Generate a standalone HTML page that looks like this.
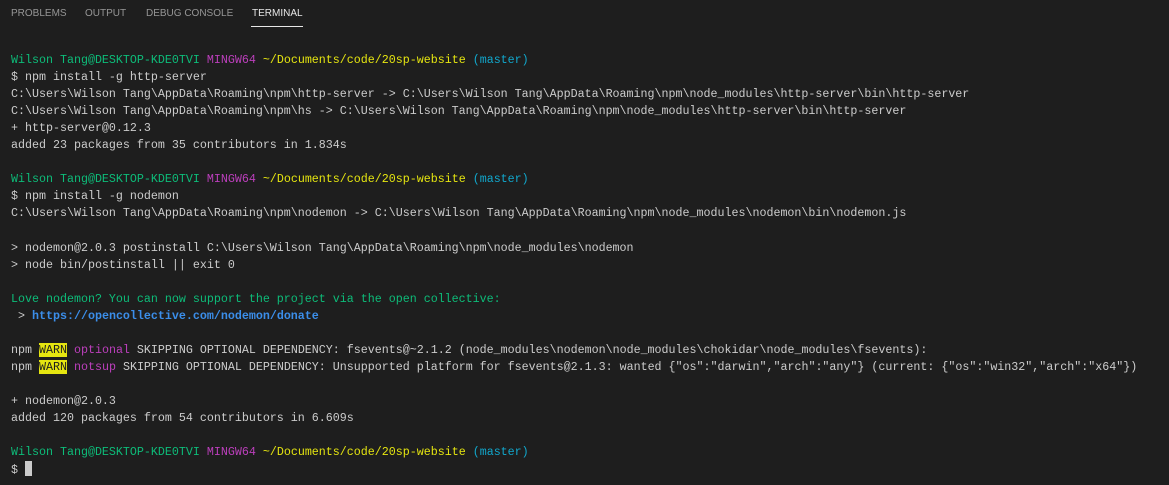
<!DOCTYPE html>
<html><head><style>
html,body{margin:0;padding:0;background:#1e1e1e;width:1169px;height:485px;overflow:hidden}
.tabs{position:absolute;top:0;left:0;height:30px;font-family:"Liberation Sans",sans-serif;font-size:10px;color:#969696}
.tab{position:absolute;top:8px;white-space:nowrap}
.act{color:#e7e7e7}
.ul{position:absolute;left:251px;top:26px;width:52px;height:1px;background:#e7e7e7}
pre{position:absolute;left:11px;top:52px;margin:0;font-family:"Liberation Mono",monospace;font-size:11.67px;line-height:17.04px;color:#cccccc}
.g{color:#0dbc79}.m{color:#bc3fbc}.y{color:#e5e510}.b{color:#3b8eea;font-weight:bold}
.w{background:#e5e510;color:#1e1e1e}
.cur{display:inline-block;width:7px;height:15px;background:#cccccc;vertical-align:-3px}
</style></head><body>
<div class="tabs">
<span class="tab" style="left:11px">PROBLEMS</span>
<span class="tab" style="left:85px">OUTPUT</span>
<span class="tab" style="left:146px">DEBUG CONSOLE</span>
<span class="tab act" style="left:252px">TERMINAL</span>
</div>
<div class="ul"></div>
<pre><span class="g">Wilson Tang@DESKTOP-KDE0TVI</span> <span class="m">MINGW64</span> <span class="y">~/Documents/code/20sp-website</span> <span style="color:#11a8cd">(master)</span>
$ npm install -g http-server
C:\Users\Wilson Tang\AppData\Roaming\npm\http-server -&gt; C:\Users\Wilson Tang\AppData\Roaming\npm\node_modules\http-server\bin\http-server
C:\Users\Wilson Tang\AppData\Roaming\npm\hs -&gt; C:\Users\Wilson Tang\AppData\Roaming\npm\node_modules\http-server\bin\http-server
+ http-server@0.12.3
added 23 packages from 35 contributors in 1.834s

<span class="g">Wilson Tang@DESKTOP-KDE0TVI</span> <span class="m">MINGW64</span> <span class="y">~/Documents/code/20sp-website</span> <span style="color:#11a8cd">(master)</span>
$ npm install -g nodemon
C:\Users\Wilson Tang\AppData\Roaming\npm\nodemon -&gt; C:\Users\Wilson Tang\AppData\Roaming\npm\node_modules\nodemon\bin\nodemon.js

&gt; nodemon@2.0.3 postinstall C:\Users\Wilson Tang\AppData\Roaming\npm\node_modules\nodemon
&gt; node bin/postinstall || exit 0

<span class="g">Love nodemon? You can now support the project via the open collective:</span>
 &gt; <span class="b">https://opencollective.com/nodemon/donate</span>

npm <span class="w">WARN</span> <span class="m">optional</span> SKIPPING OPTIONAL DEPENDENCY: fsevents@~2.1.2 (node_modules\nodemon\node_modules\chokidar\node_modules\fsevents):
npm <span class="w">WARN</span> <span class="m">notsup</span> SKIPPING OPTIONAL DEPENDENCY: Unsupported platform for fsevents@2.1.3: wanted {"os":"darwin","arch":"any"} (current: {"os":"win32","arch":"x64"})

+ nodemon@2.0.3
added 120 packages from 54 contributors in 6.609s

<span class="g">Wilson Tang@DESKTOP-KDE0TVI</span> <span class="m">MINGW64</span> <span class="y">~/Documents/code/20sp-website</span> <span style="color:#11a8cd">(master)</span>
$ <span class="cur"></span></pre>
</body></html>
